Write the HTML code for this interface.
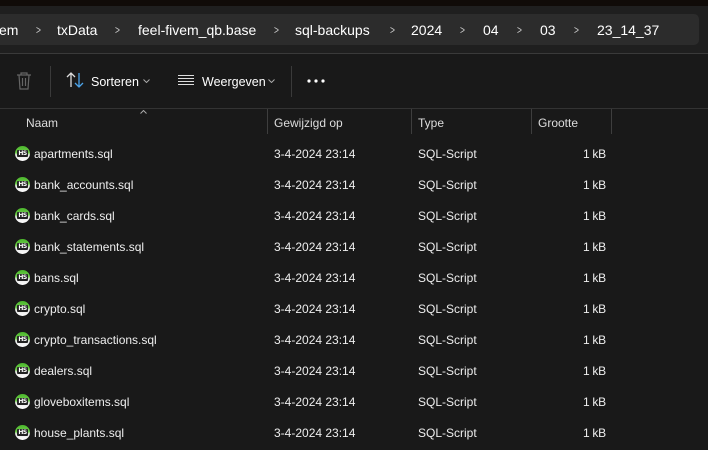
<!DOCTYPE html>
<html><head><style>
body{margin:0;width:708px;height:450px;background:#191919;font-family:"Liberation Sans",sans-serif;color:#fff;overflow:hidden;position:relative;font-size:12px}
.top{position:absolute;left:0;top:0;width:708px;height:6px;background:#100b08}
.addr{position:absolute;left:0;top:6px;width:708px;height:47px;background:#1f1f1f;border-bottom:1px solid #3a3a3a}
.crumb{position:absolute;left:0;top:8px;width:699px;height:31px;background:#2c2c2c;border-radius:0 5px 5px 0}
.crumb span{position:absolute;top:8px;font-size:14px;color:#fff}
.crumb .c{color:#ccc;font-size:12px;top:9px;transform:scaleX(.7)}
.tb{position:absolute;top:54px;left:0;width:708px;height:54px;border-bottom:1px solid #333}
.tb span{position:absolute;top:21px;font-size:12.5px}
.sep{position:absolute;width:1px;height:31px;top:66px;background:#3a3a3a}
.hdr{position:absolute;top:109px;height:24px;width:708px}
.hdr span{position:absolute;top:7px;font-size:12px;color:#ddd}
.hl{position:absolute;top:109px;width:1px;height:25px;background:#3e3e3e}
.row{position:absolute;left:0;width:708px;height:31px}
.row span{position:absolute;top:8px;font-size:12px;color:#eee}
.ic{position:absolute;left:15px;top:7px;width:15px;height:15px;border-radius:50%;background:linear-gradient(#4bb52c 0,#6fd04a 45%,#e6e6e6 60%,#fff 100%);overflow:hidden}
.ic b{position:absolute;left:2px;top:4px;width:11px;height:7px;background:#222;border-radius:1px;font-size:6px;color:#fff;text-align:center;line-height:7px;font-weight:bold;font-family:"DejaVu Sans",sans-serif;letter-spacing:-.5px}
</style></head><body>
<div class="top"></div>
<div class="addr"><div class="crumb">
<span style="left:-1px">em</span><span class="c" style="left:35px">&gt;</span>
<span style="left:57px">txData</span><span class="c" style="left:114px">&gt;</span>
<span style="left:138px">feel-fivem_qb.base</span><span class="c" style="left:273px">&gt;</span>
<span style="left:295px">sql-backups</span><span class="c" style="left:389px">&gt;</span>
<span style="left:411px">2024</span><span class="c" style="left:459px">&gt;</span>
<span style="left:483px">04</span><span class="c" style="left:516px">&gt;</span>
<span style="left:540px">03</span><span class="c" style="left:573px">&gt;</span>
<span style="left:597px">23_14_37</span>
</div></div>
<div class="tb">
<svg style="position:absolute;left:16px;top:18px" width="16" height="18" viewBox="0 0 16 18" fill="none" stroke="#666" stroke-width="1.2"><path d="M1 3h14M5 3V1h6v2M3 3l1 14h8l1-14M6.5 6v8M9.5 6v8"/></svg>
<svg style="position:absolute;left:66px;top:18px" width="18" height="16" viewBox="0 0 18 16" fill="none" stroke-width="1.3"><path d="M5 15V1M1 5l4-4 4 4" stroke="#ddd"/><path d="M13 1v14M9 11l4 4 4-4" stroke="#4ca3e8"/></svg>
<span style="left:91px">Sorteren</span>
<svg style="position:absolute;left:143px;top:25px" width="7" height="4" viewBox="0 0 7 4" fill="none" stroke="#aaa"><path d="M.5.5l3 3 3-3"/></svg>
<svg style="position:absolute;left:178px;top:21px" width="16" height="10" viewBox="0 0 16 10" stroke="#ddd" stroke-width="1"><path d="M0 .5h16M0 3.5h16M0 6.5h16M0 9.5h16"/></svg>
<span style="left:202px">Weergeven</span>
<svg style="position:absolute;left:268px;top:25px" width="7" height="4" viewBox="0 0 7 4" fill="none" stroke="#aaa"><path d="M.5.5l3 3 3-3"/></svg>
<svg style="position:absolute;left:307px;top:25px" width="18" height="4"><circle cx="2" cy="2" r="1.6" fill="#fff"/><circle cx="9" cy="2" r="1.6" fill="#fff"/><circle cx="16" cy="2" r="1.6" fill="#fff"/></svg>
</div>
<div class="sep" style="left:50px"></div><div class="sep" style="left:291px"></div>
<svg style="position:absolute;left:140px;top:110px" width="7" height="4" viewBox="0 0 7 4" fill="none" stroke="#aaa"><path d="M.5 3.5l3-3 3 3"/></svg>
<div class="hdr">
<span style="left:26px">Naam</span><span style="left:274px">Gewijzigd op</span><span style="left:418px">Type</span><span style="left:538px">Grootte</span>
</div>
<div class="hl" style="left:267px"></div><div class="hl" style="left:411px"></div><div class="hl" style="left:531px"></div><div class="hl" style="left:611px"></div>
<div id="rows"></div>
<script>
var n=["apartments.sql","bank_accounts.sql","bank_cards.sql","bank_statements.sql","bans.sql","crypto.sql","crypto_transactions.sql","dealers.sql","gloveboxitems.sql","house_plants.sql"],h="";
n.forEach(function(x,i){h+='<div class="row" style="top:'+(139+i*31)+'px"><div class="ic"><b>HS</b></div><span style="left:34px">'+x+'</span><span style="left:274px">3-4-2024 23:14</span><span style="left:418px">SQL-Script</span><span style="left:583px;letter-spacing:-.3px">1 kB</span></div>'});
document.getElementById("rows").innerHTML=h;
</script>
</body></html>
